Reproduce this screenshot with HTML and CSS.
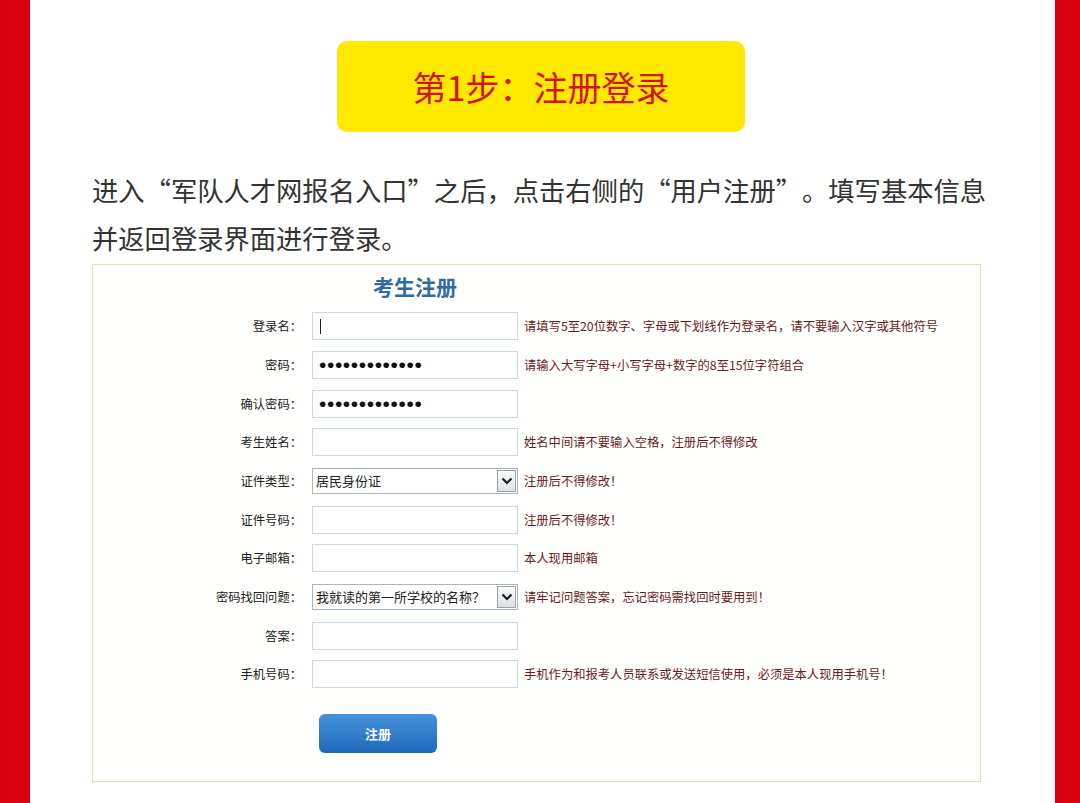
FILE: index.html
```html
<!DOCTYPE html>
<html lang="zh-CN">
<head>
    <meta charset="UTF-8">
    <meta name="viewport" content="width=device-width, initial-scale=1.0">
    <title>第1步：注册登录</title>
    <link rel="stylesheet" href="styles.css">
</head>
<body>

<div class="page">

  <!-- 步骤标题 -->
  <div class="step-title">第1步：注册登录</div>

  <p class="intro">进入“军队人才网报名入口”之后，点击右侧的“用户注册”。填写基本信息<br>并返回登录界面进行登录。</p>

  <!-- 考生注册表单截图 -->
  <div class="reg-box">
    <h3 class="reg-title">考生注册</h3>

    <div class="reg-rows">
      <div class="row">
        <label>登录名：</label>
        <div class="field">
          <input type="text" class="txt">
          <span class="caret"></span>
        </div>
        <span class="hint">请填写5至20位数字、字母或下划线作为登录名，请不要输入汉字或其他符号</span>
      </div>
      <div class="row">
        <label>密码：</label>
        <div class="field"><input type="password" class="txt pwd" value="aaaaaaaaaaaaa"></div>
        <span class="hint">请输入大写字母+小写字母+数字的8至15位字符组合</span>
      </div>
      <div class="row">
        <label>确认密码：</label>
        <div class="field"><input type="password" class="txt pwd" value="aaaaaaaaaaaaa"></div>
      </div>
      <div class="row">
        <label>考生姓名：</label>
        <div class="field"><input type="text" class="txt"></div>
        <span class="hint">姓名中间请不要输入空格，注册后不得修改</span>
      </div>
      <div class="row">
        <label>证件类型：</label>
        <div class="field sel">
          <select><option>居民身份证</option></select>
          <span class="sel-arrow"><svg width="12" height="8" viewBox="0 0 12 8"><path d="M1.5 1.5 L6 6 L10.5 1.5" fill="none" stroke="#1a1a1a" stroke-width="2.2"/></svg></span>
        </div>
        <span class="hint">注册后不得修改！</span>
      </div>
      <div class="row">
        <label>证件号码：</label>
        <div class="field"><input type="text" class="txt"></div>
        <span class="hint">注册后不得修改！</span>
      </div>
      <div class="row">
        <label>电子邮箱：</label>
        <div class="field"><input type="text" class="txt"></div>
        <span class="hint">本人现用邮箱</span>
      </div>
      <div class="row">
        <label>密码找回问题：</label>
        <div class="field sel">
          <select><option>我就读的第一所学校的名称？</option></select>
          <span class="sel-arrow"><svg width="12" height="8" viewBox="0 0 12 8"><path d="M1.5 1.5 L6 6 L10.5 1.5" fill="none" stroke="#1a1a1a" stroke-width="2.2"/></svg></span>
        </div>
        <span class="hint">请牢记问题答案，忘记密码需找回时要用到！</span>
      </div>
      <div class="row">
        <label>答案：</label>
        <div class="field"><input type="text" class="txt"></div>
      </div>
      <div class="row">
        <label>手机号码：</label>
        <div class="field"><input type="text" class="txt"></div>
        <span class="hint">手机作为和报考人员联系或发送短信使用，必须是本人现用手机号！</span>
      </div>
    </div>

    <button class="reg-btn">注册</button>
  </div>

</div>

</body>
</html>
```

FILE: styles.css
```css
body {
    margin: 0;
    padding: 0;
    background-color: #d8000f;
    font-family: "Noto Sans CJK SC", "Noto Sans", sans-serif;
    color: #333;
}

.page {
    margin: 0 25px 0 30px;
    background-color: #fff;
    min-height: 803px;
    overflow: hidden;
}

.step-title {
    margin: 41px 0 0 307px;
    width: 408px;
    height: 91px;
    background-color: #ffe900;
    border-radius: 10px;
    display: flex;
    align-items: center;
    justify-content: center;
    color: #d4121a;
    font-size: 34px;
}

.intro {
    margin: 34px 0 0 62px;
    font-size: 26.3px;
    line-height: 48px;
    color: #333;
    font-feature-settings: "fwid" 1; /* 全角引号 */
    text-spacing-trim: space-all;
}

/* 注册表单 */
.reg-box {
    margin: 2px 0 0 62px;
    width: 887px;
    border: 1px solid #eadcb3;
    background-color: #fffffd;
    padding: 8px 0 28px;
}

.reg-title {
    margin: 0 0 0 280px;
    font-size: 21px;
    line-height: 26px;
    font-weight: bold;
    color: #2f6aa6;
}

.reg-rows {
    margin-top: 8px;
}

.row {
    display: flex;
    align-items: center;
    height: 38.67px;
    font-size: 12.3px;
}

.row label {
    width: 209px;
    text-align: right;
    color: #222;
}

.field {
    position: relative;
    margin-left: 10px;
    width: 206px;
    height: 28px;
}

.txt {
    box-sizing: border-box;
    width: 100%;
    height: 100%;
    margin: 0;
    border: 1px solid #cbd9e2;
    background: #fff;
    padding: 0 6px;
    outline: none;
}

.pwd {
    font-family: "Liberation Sans", sans-serif;
    font-size: 21px;
    letter-spacing: 0.6px;
    color: #111;
}

.caret {
    position: absolute;
    left: 8px;
    top: 7px;
    width: 1px;
    height: 15px;
    background-color: #222;
}

.sel {
    height: 26px;
}

.sel select {
    appearance: none;
    box-sizing: border-box;
    width: 100%;
    height: 100%;
    margin: 0;
    border: 1px solid #aab6c0;
    background: #fff;
    padding: 0 0 0 3px;
    font-family: "Noto Sans CJK SC", sans-serif;
    font-size: 13px;
    color: #222;
}

.sel-arrow {
    position: absolute;
    top: 2px;
    right: 2px;
    width: 19px;
    height: 22px;
    box-sizing: border-box;
    border: 1px solid #9aa4ad;
    background: linear-gradient(#fafafa, #dfe2e5);
    display: flex;
    align-items: center;
    justify-content: center;
}

.hint {
    margin-left: 6px;
    color: #6a1a1d;
    white-space: nowrap;
}

.reg-btn {
    margin: 20px 0 0 226px;
    width: 118px;
    height: 39px;
    border: none;
    border-radius: 6px;
    background: linear-gradient(#4493dc, #1f69b8);
    color: #fff;
    font-family: "Noto Sans CJK SC", sans-serif;
    font-size: 13px;
    font-weight: bold;
    cursor: pointer;
}
```
